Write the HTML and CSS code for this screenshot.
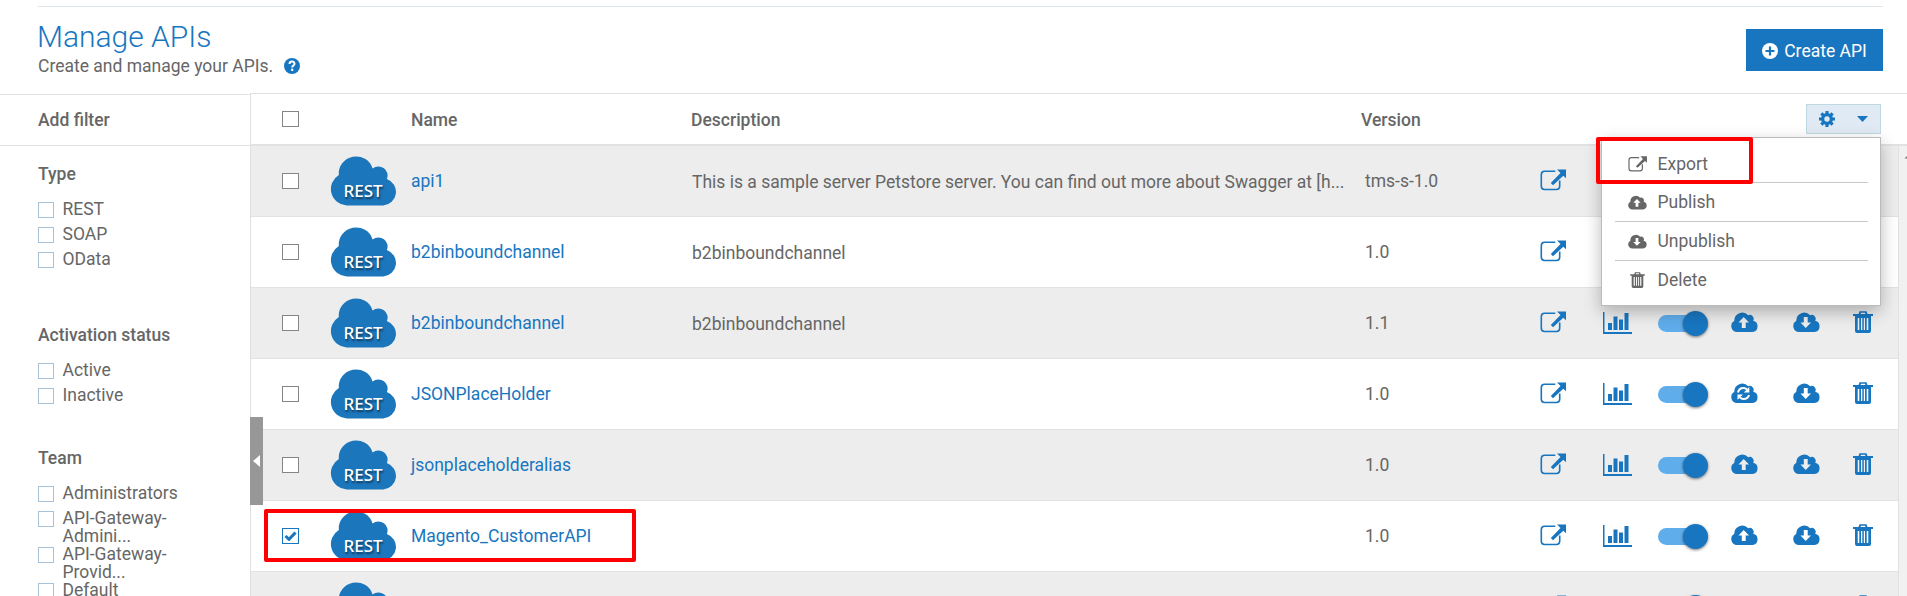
FILE: index.html
```html
<!DOCTYPE html>
<html lang="en">
<head>
<meta charset="utf-8">
<title>Manage APIs</title>
<link rel="stylesheet" href="styles.css">
</head>
<body>
<svg class="defs" width="0" height="0">
  <symbol id="cloud" viewBox="0.600 0 64.900 50" preserveAspectRatio="none"><path fill="#1c76bc" d="M17 49.500A16.500 16.500 0 0 1 9.300 19A17 17 0 0 1 42.500 12.500A9 9 0 0 1 56.500 23A13.700 13.700 0 0 1 53 49.500Z"/></symbol>
  <symbol id="export" viewBox="0 0 26 22"><path fill="none" stroke="currentColor" stroke-width="1.600" d="M15.300 2.300H4.500A3.300 3.300 0 0 0 1.300 5.500V17.300A3.300 3.300 0 0 0 4.500 20.500H16.500A3.300 3.300 0 0 0 19.700 17.300V11.500"/><path fill="currentColor" d="M17 .5H26V9.300L23.300 6.800L13 16.200L10.800 14L20.500 4Z"/></symbol>
  <symbol id="chart" viewBox="0 0 29 22"><path fill="currentColor" d="M0 0H1.500V20H29V22H0ZM5 11H9V18H5ZM10.500 4.500H14.500V18H10.500ZM16 7.500H20V18H16ZM21.500 1H25.500V18H21.500Z"/></symbol>
  <symbol id="up" viewBox="0 0 27 20"><path fill="currentColor" fill-rule="evenodd" d="M6 20A6 6 0 0 1 3.300 8.800A8 8 0 0 1 17.200 3.200A4 4 0 0 1 22.200 8.800A5.700 5.700 0 0 1 21.500 20ZM12.700 5L7.500 10.400H10.800V16H14.700V10.400H18Z"/></symbol>
  <symbol id="down" viewBox="0 0 27 20"><path fill="currentColor" fill-rule="evenodd" d="M6 20A6 6 0 0 1 3.300 8.800A8 8 0 0 1 17.200 3.200A4 4 0 0 1 22.200 8.800A5.700 5.700 0 0 1 21.500 20ZM12.700 16L7.500 10.600H10.800V5H14.700V10.600H18Z"/></symbol>
  <symbol id="sync" viewBox="0 0 27 20"><path fill="currentColor" d="M6 20A6 6 0 0 1 3.300 8.800A8 8 0 0 1 17.200 3.200A4 4 0 0 1 22.200 8.800A5.700 5.700 0 0 1 21.500 20Z"/><path fill="none" stroke="#fff" stroke-width="2" d="M7 9.500Q8 5 12.500 5Q14.500 5 16 6.500M18 12Q17 16 12.500 16Q10.500 16 9 14.500"/><path fill="#fff" d="M18.300 4V9.500H12.800ZM6.500 16.800V11.500H12Z"/></symbol>
  <symbol id="trash" viewBox="0 0 20 22"><path fill="currentColor" fill-rule="evenodd" d="M5.500 3L6.500.3H13.500L14.500 3H20V5H18V20Q18 22 16 22H4Q2 22 2 20V5H0V3ZM7.500 3H12.500L12 1.800H8ZM4.700 7V19H6.300V7ZM8 7V19H9.300V7ZM10.800 7V19H12V7ZM13.700 7V19H15.300V7Z"/></symbol>
</svg>

<header class="page-head">
  <div>
    <h1>Manage APIs</h1>
    <p class="sub">Create and manage your APIs.
      <svg class="help" viewBox="0 0 16 16"><circle cx="8" cy="8" r="8" fill="#1876c0"/><path d="M5.500 6Q5.700 3.600 8.100 3.600T10.500 5.800Q10.500 7 9.300 7.600T8.200 9.500" fill="none" stroke="#fff" stroke-width="2"/><rect x="7.100" y="10.700" width="2.200" height="2.200" fill="#fff"/></svg>
    </p>
  </div>
  <button class="create"><svg viewBox="0 0 16 16"><circle cx="8" cy="8" r="8" fill="#fff"/><path d="M8 3.500V12.500M3.500 8H12.500" stroke="#1876c0" stroke-width="2.200"/></svg>Create API</button>
</header>

<div class="main">
  <aside class="side">
    <div class="add">Add filter</div>
    <section class="group g-type">
      <h2>Type</h2>
      <label><i></i>REST</label>
      <label><i></i>SOAP</label>
      <label><i></i>OData</label>
    </section>
    <section class="group g-status">
      <h2>Activation status</h2>
      <label><i></i>Active</label>
      <label><i></i>Inactive</label>
    </section>
    <section class="group g-team">
      <h2>Team</h2>
      <label><i></i>Administrators</label>
      <label><i></i><span>API-Gateway-<br>Admini...</span></label>
      <label><i></i><span>API-Gateway-<br>Provid...</span></label>
      <label><i></i>Default</label>
    </section>
  </aside>
  <div class="collapse"><svg width="7" height="12" viewBox="0 0 7 12"><path fill="#fff" d="M7 0V12L0 6Z"/></svg></div>

  <div class="table">
    <div class="thead">
      <i class="box"></i><span></span><b>Name</b><b>Description</b><b>Version</b>
      <div class="gear"><svg width="16" height="16" viewBox="0 0 16 16"><g fill="#1876c0"><path d="M6.400 0H9.600V16H6.400ZM0 6.400H16V9.600H0Z"/><path d="M6.400 0H9.600V16H6.400ZM0 6.400H16V9.600H0Z" transform="rotate(45 8 8)"/><circle cx="8" cy="8" r="6"/></g><circle cx="8" cy="8" r="2.700" fill="#e0eaf5"/></svg><svg width="11" height="6" viewBox="0 0 11 6"><path fill="#1876c0" d="M0 0H11L5.500 6Z"/></svg></div>
    </div>
    <div class="body">
      <div class="rows" id="rows"></div>
      <div class="scroll"><svg width="8" height="5" viewBox="0 0 8 5"><path fill="#777" d="M5.500 3.500L8 1V3.500Z"/></svg></div>
    </div>
  </div>
</div>

<div class="menu">
  <div><svg width="19" height="16"><use href="#export"/></svg>Export</div>
  <div><svg width="19" height="15"><use href="#up"/></svg>Publish</div>
  <div><svg width="19" height="15"><use href="#down"/></svg>Unpublish</div>
  <div><svg width="19" height="16"><use href="#trash"/></svg>Delete</div>
</div>
<div class="mark mark-export"></div>
<div class="mark mark-row"></div>
<script src="rows.js"></script>
</body>
</html>
```
FILE: styles.css
```css
* { box-sizing: border-box; }
body { margin: 0; width: 1907px; height: 596px; overflow: hidden; position: relative; background: #fff; color: #666; font: 17.5px/20px Roboto, sans-serif; }
.defs { position: absolute; }
svg { flex: none; }
.page-head { height: 87px; margin: 6px 24px 0 38px; border-top: 1px solid #dfe7ec; display: flex; justify-content: space-between; align-items: flex-start; }
h1 { margin: 11px 0 0 -1px; font-size: 30px; line-height: 38px; font-weight: 300; color: #1876c0; }
.sub { margin: 0; display: flex; align-items: center; gap: 11px; line-height: 20px; }
.help { width: 16px; height: 16px; }
.create { margin-top: 22px; width: 137px; height: 42px; border: 0; background: #1876c0; color: #fff; font: inherit; display: flex; align-items: center; justify-content: center; gap: 6px; padding: 2px 0 0; white-space: nowrap; }
.create svg { width: 16px; height: 16px; }
.main { display: flex; height: 503px; position: relative; }
.side { width: 250px; padding-top: 1px; overflow: hidden; flex: none; }
.add { height: 52px; border-top: 1px solid #e2e2e2; border-bottom: 1px solid #e2e2e2; padding: 15px 0 0 38px; font-weight: 500; }
.group { padding-left: 38px; }
.group h2 { margin: 0 0 16px; font-size: 17.5px; line-height: 20px; font-weight: 500; }
.group label { display: flex; align-items: flex-start; line-height: 18px; padding-bottom: 7px; gap: 8.5px; }
.group label:has(span) { padding-bottom: 0; }
.group label i { width: 16px; height: 16px; border: 1px solid #a9c1d6; margin-top: 2px; flex: none; }
.g-type { padding-top: 18px; }
.g-status { padding-top: 49.5px; }
.g-team { padding-top: 37.5px; }
.table { flex: 1; border-left: 1px solid #dfdfdf; border-top: 1px solid #e2e2e2; }
.thead { height: 52px; border-bottom: 2px solid #e2e2e2; padding-left: 31px; display: grid; grid-template-columns: 48px 81px 280px 670px 1fr 107px; align-items: center; }
.thead b { font-weight: 500; padding-top: 1px; }
.box { width: 17px; height: 16px; border: 1px solid #858585; background: #fff; display: block; }
.box.on { border-color: #1876c0; }
.box svg { display: block; margin: 2px 0 0 1px; }
.gear { width: 75px; height: 30px; margin-left: 6px; background: #e0eaf5; border: 1px solid #bfd8e2; display: flex; align-items: center; justify-content: center; gap: 22px; }
.body { display: flex; height: 450px; overflow: hidden; }
.rows { flex: 1; border-right: 1px solid #e2e2e2; }
.scroll { width: 8px; padding-top: 9px; background: #f1f1f1; }
.scroll svg { display: block; }
.row { height: 71px; border-bottom: 1px solid #e2e2e2; padding-left: 31px; display: grid; grid-template-columns: 48px 81px 281px 673px 175px 63px 55px 73px 62px 60px 1fr; align-items: center; }
.row:nth-child(odd) { background: #ededed; }
.row > svg { color: #1876c0; margin-bottom: 3px; }
.row > .i-chart { margin-bottom: 0; }
.name { color: #1876c0; white-space: nowrap; }
.desc { white-space: nowrap; padding-top: 2px; }
.cloud { width: 66px; height: 50px; display: grid; }
.cloud svg { width: 66px; height: 50px; grid-area: 1 / 1; }
.cloud span { grid-area: 1 / 1; position: relative; color: #fff; font: 500 17px/20px "Noto Sans", sans-serif; padding: 25px 0 0 13.5px; text-shadow: 1px 2px 2px #0008; }
.toggle { width: 50px; height: 25px; display: flex; align-items: center; position: relative; }
.toggle::before { content: ""; width: 44px; height: 17px; border-radius: 9px; background: #60adec; }
.toggle::after { content: ""; position: absolute; right: 0; width: 25px; height: 25px; border-radius: 50%; background: #1876c0; box-shadow: 0 1px 3px #0008; }
.collapse { position: absolute; left: 250px; top: 324px; width: 13px; height: 88px; background: #979797; display: flex; align-items: center; justify-content: center; z-index: 2; }
.menu { position: absolute; left: 1601px; top: 137px; width: 280px; height: 169px; background: #fff; border: 1px solid #bbb; padding: 6px 12px 0 13px; box-shadow: 0 6px 16px #0004; }
.menu div { height: 39px; border-bottom: 1px solid #c8c8c8; display: flex; align-items: center; gap: 10.5px; padding-left: 13px; }
.menu div:first-child { padding-top: 1px; }
.menu div:last-child { border: 0; height: 37px; }
.mark { position: absolute; border: 4px solid #f00; border-radius: 2px; z-index: 3; }
.mark-export { left: 1596px; top: 137px; width: 157px; height: 47px; }
.mark-row { left: 264px; top: 509px; width: 372px; height: 53px; }
```
FILE: rows.js
```js
const apis = [
  ["api1", "This is a sample server Petstore server. You can find out more about Swagger at [h...", "tms-s-1.0", "up"],
  ["b2binboundchannel", "b2binboundchannel", "1.0", "up"],
  ["b2binboundchannel", "b2binboundchannel", "1.1", "up"],
  ["JSONPlaceHolder", "", "1.0", "sync"],
  ["jsonplaceholderalias", "", "1.0", "up"],
  ["Magento_CustomerAPI", "", "1.0", "up"],
  ["", "", "", "up"]
];
const icon = (id, w, h) => `<svg class="i-${id}" width="${w}" height="${h}"><use href="#${id}"/></svg>`;
document.getElementById("rows").innerHTML = apis.map(([name, desc, version, action], i) => `
  <div class="row">
    <i class="box${i === 5 ? " on" : ""}">${i === 5 ? '<svg width="13" height="10" viewBox="0 0 13 10"><path d="M1.500 5L5 8.300L11.500 1.500" fill="none" stroke="#1876c0" stroke-width="3"/></svg>' : ""}</i>
    <div class="cloud"><svg><use href="#cloud"/></svg>${name ? "<span>REST</span>" : ""}</div>
    <span class="name">${name}</span><span class="desc">${desc}</span><span>${version}</span>
    ${icon("export", 26, 22)}${icon("chart", 29, 22)}<span class="toggle"></span>${icon(action, 27, 20)}${icon("down", 27, 20)}${icon("trash", 20, 22)}
  </div>`).join("");
```
